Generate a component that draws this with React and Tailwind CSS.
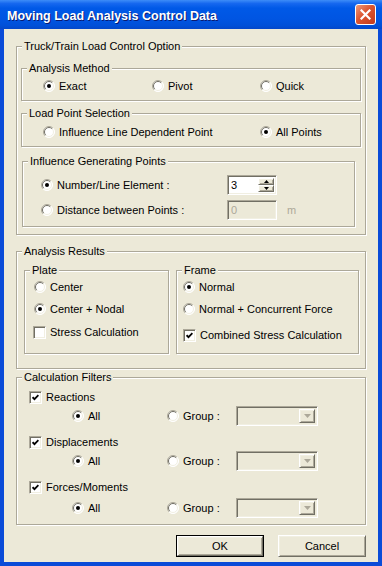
import React from 'react';

const sunken =
  'border border-t-[#ACA899] border-l-[#ACA899] border-b-white border-r-white shadow-[inset_1px_1px_0_#716F64,inset_-1px_-1px_0_#F1EFE2]';
const raised =
  'border border-t-white border-l-white border-b-[#716F64] border-r-[#716F64] shadow-[inset_1px_1px_0_#F1EFE2,inset_-1px_-1px_0_#ACA899]';

function RadioDot({ checked }) {
  return (
    <svg width="12" height="12" viewBox="0 0 12 12" className="shrink-0">
      <circle cx="6" cy="6" r="5.5" fill="#fff" />
      <path d="M9.9 2.1A5.5 5.5 0 0 0 2.1 9.9" fill="none" stroke="#ACA899" />
      <path d="M2.1 9.9A5.5 5.5 0 0 0 9.9 2.1" fill="none" stroke="#fff" />
      <path d="M9.2 2.8A4.5 4.5 0 0 0 2.8 9.2" fill="none" stroke="#716F64" />
      <path d="M2.8 9.2A4.5 4.5 0 0 0 9.2 2.8" fill="none" stroke="#F1EFE2" />
      {checked && <circle cx="6" cy="6" r="2" fill="#000" />}
    </svg>
  );
}

function CheckBox({ checked }) {
  return (
    <span className={`flex h-[13px] w-[13px] shrink-0 items-center justify-center bg-white ${sunken}`}>
      {checked && (
        <svg width="7" height="7" viewBox="0 0 7 7">
          <path d="M0.6 3.2L2.5 5.2L6.4 1.2" fill="none" stroke="#000" strokeWidth="1.8" />
        </svg>
      )}
    </span>
  );
}

function RadioItem({ checked, label, className = '' }) {
  return (
    <div className={`flex h-[14px] shrink-0 items-center gap-[4px] ${className}`}>
      <RadioDot checked={checked} />
      <span className="whitespace-nowrap">{label}</span>
    </div>
  );
}

function CheckItem({ checked, label, className = '' }) {
  return (
    <div className={`flex h-[14px] shrink-0 items-center gap-[4px] ${className}`}>
      <CheckBox checked={checked} />
      <span className="whitespace-nowrap">{label}</span>
    </div>
  );
}

function Group({ label, className = '', children }) {
  return (
    <div className={`relative shrink-0 border border-[#ACA899] shadow-[1px_1px_0_#fff,inset_1px_1px_0_#fff] ${className}`}>
      <span className="absolute left-[5px] top-[-8px] whitespace-nowrap bg-[#ECE9D8] px-[2px] leading-[14px]">{label}</span>
      {children}
    </div>
  );
}

function Spinner({ value }) {
  return (
    <div className={`flex h-[20px] w-[50px] bg-white p-[2px] ${sunken}`}>
      <div className="flex flex-1 items-center pl-[1px]">{value}</div>
      <div className="flex w-[16px] flex-col">
        <div className={`flex flex-1 items-center justify-center bg-[#ECE9D8] ${raised}`}>
          <svg width="5" height="3" viewBox="0 0 5 3">
            <path d="M2.5 0L5 3H0z" fill="#000" />
          </svg>
        </div>
        <div className={`flex flex-1 items-center justify-center bg-[#ECE9D8] ${raised}`}>
          <svg width="5" height="3" viewBox="0 0 5 3">
            <path d="M0 0H5L2.5 3z" fill="#000" />
          </svg>
        </div>
      </div>
    </div>
  );
}

function Combo() {
  return (
    <div className={`flex h-[20px] w-[82px] justify-end bg-[#ECE9D8] p-[2px] ${sunken}`}>
      <div className={`flex w-[16px] items-center justify-center bg-[#ECE9D8] ${raised}`}>
        <svg width="7" height="4" viewBox="0 0 7 4">
          <path d="M0 0H7L3.5 4z" fill="#ACA899" />
        </svg>
      </div>
    </div>
  );
}

function FilterRow({ className = '' }) {
  return (
    <div className={`ml-[55px] flex h-[20px] items-center ${className}`}>
      <RadioItem checked label="All" className="w-[95px]" />
      <RadioItem label="Group :" className="w-[69px]" />
      <Combo />
    </div>
  );
}

function TitleBar() {
  return (
    <div className="flex h-[29px] shrink-0 items-center bg-[linear-gradient(180deg,#3D8DF8_0%,#1668EF_12%,#0059E7_28%,#0055E2_65%,#0050D8_88%,#0447C9_100%)] pl-[7px] pr-[6px]">
      <span className="mt-[2px] whitespace-nowrap text-[12.5px] font-bold text-white [text-shadow:1px_1px_0_#0A1A70]">
        Moving Load Analysis Control Data
      </span>
      <div className="ml-auto flex h-[21px] w-[21px] items-center justify-center rounded-[3px] border border-white bg-[linear-gradient(135deg,#EC9A7C_0%,#DC5530_45%,#C33A1B_100%)]">
        <svg width="11" height="11" viewBox="0 0 11 11">
          <path d="M1.5 1.5L9.5 9.5M9.5 1.5L1.5 9.5" stroke="#fff" strokeWidth="2.2" strokeLinecap="square" />
        </svg>
      </div>
    </div>
  );
}

export default function App() {
  return (
    <div className="flex h-[566px] w-[382px] flex-col bg-[#0A4BD8] font-['Liberation_Sans',Arial,sans-serif] text-[11px] leading-[14px] text-black">
      <TitleBar />
      <div className="mx-[4px] mb-[4px] flex flex-1 flex-col bg-[#ECE9D8] px-[12px] pt-[17px]">
        <Group label="Truck/Train Load Control Option" className="flex h-[189px] flex-col px-[4px] pt-[21px]">
          <Group label="Analysis Method" className="flex h-[33px] pl-[21px] pt-[10px]">
            <RadioItem checked label="Exact" className="w-[109px]" />
            <RadioItem label="Pivot" className="w-[108px]" />
            <RadioItem label="Quick" />
          </Group>
          <Group label="Load Point Selection" className="mt-[12px] flex h-[34px] pl-[21px] pt-[11px]">
            <RadioItem label="Influence Line Dependent Point" className="w-[217px]" />
            <RadioItem checked label="All Points" />
          </Group>
          <Group label="Influence Generating Points" className="ml-[1px] mt-[14px] flex h-[66px] w-[333px] flex-col pl-[18px] pt-[13px]">
            <div className="flex h-[20px] items-center">
              <RadioItem checked label="Number/Line Element :" className="w-[186px]" />
              <Spinner value="3" />
            </div>
            <div className="mt-[5px] flex h-[20px] items-center">
              <RadioItem label="Distance between Points :" className="w-[186px]" />
              <div className={`flex h-[20px] w-[50px] items-center bg-[#ECE9D8] pl-[3px] text-[#ACA899] ${sunken}`}>0</div>
              <span className="ml-[10px] text-[#ACA899]">m</span>
            </div>
          </Group>
        </Group>

        <Group label="Analysis Results" className="mt-[16px] flex h-[118px] pl-[7px] pt-[18px]">
          <Group label="Plate" className="flex h-[84px] w-[145px] flex-col pl-[9px] pt-[9px]">
            <RadioItem label="Center" />
            <RadioItem checked label="Center + Nodal" className="mt-[8px]" />
            <CheckItem label="Stress Calculation" className="-ml-[1px] mt-[9px]" />
          </Group>
          <Group label="Frame" className="ml-[7px] flex h-[84px] w-[183px] flex-col pl-[6px] pt-[9px]">
            <RadioItem checked label="Normal" />
            <RadioItem label="Normal + Concurrent Force" className="mt-[8px]" />
            <CheckItem checked label="Combined Stress Calculation" className="mt-[12px]" />
          </Group>
        </Group>

        <Group label="Calculation Filters" className="mt-[8px] flex h-[148px] flex-col pt-[12px]">
          <CheckItem checked label="Reactions" className="ml-[12px]" />
          <FilterRow className="mt-[2px]" />
          <CheckItem checked label="Displacements" className="ml-[12px] mt-[9px]" />
          <FilterRow className="mt-[2px]" />
          <CheckItem checked label="Forces/Moments" className="ml-[12px] mt-[9px]" />
          <FilterRow className="mt-[4px]" />
        </Group>

        <div className="mt-[10px] flex justify-end gap-[14px]">
          <div className="h-[22px] w-[88px] border border-black">
            <div className={`flex h-full items-center justify-center bg-[#ECE9D8] ${raised}`}>OK</div>
          </div>
          <div className={`flex h-[22px] w-[88px] items-center justify-center bg-[#ECE9D8] ${raised}`}>Cancel</div>
        </div>
      </div>
    </div>
  );
}
